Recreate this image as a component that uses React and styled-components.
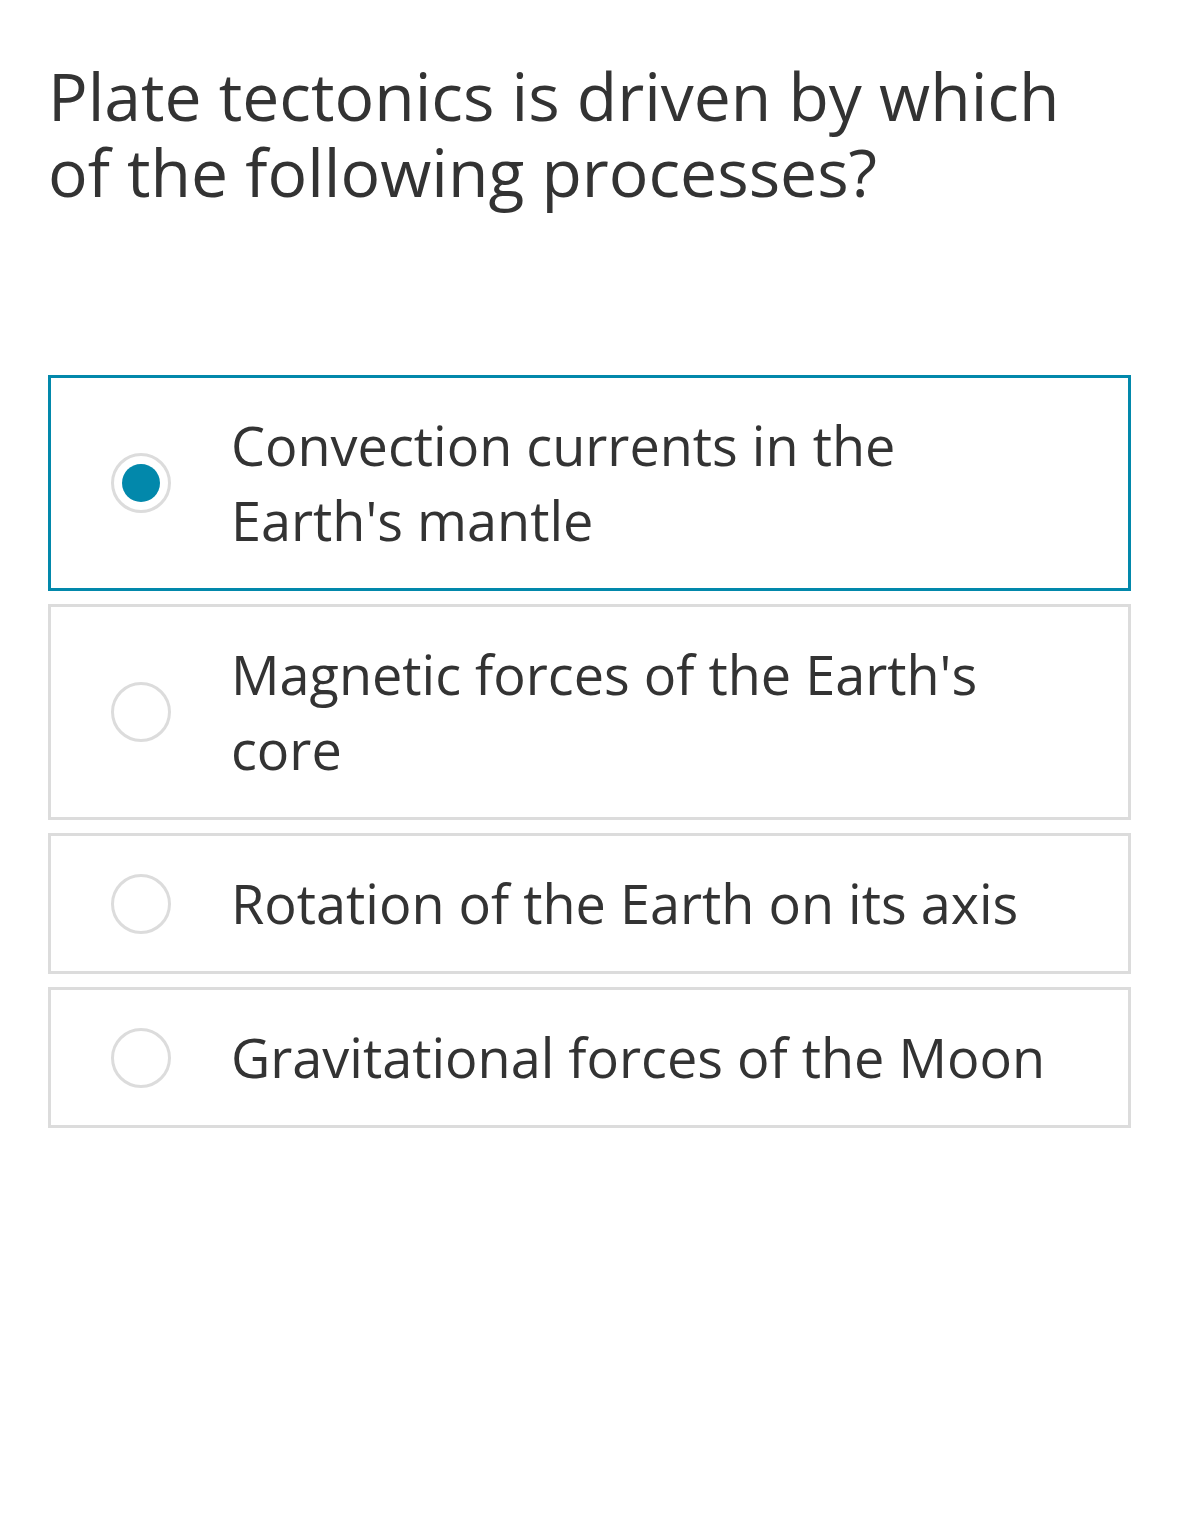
import React, { useState } from "react";
import styled, { createGlobalStyle } from "styled-components";

const options = [
  "Convection currents in the Earth's mantle",
  "Magnetic forces of the Earth's core",
  "Rotation of the Earth on its axis",
  "Gravitational forces of the Moon",
];

const App = () => {
  const [selected, setSelected] = useState(0);

  return (
    <>
      <GlobalStyle />
      <Page>
        <Question>
          Plate tectonics is driven by which of the following processes?
        </Question>
        <OptionList>
          {options.map((text, i) => (
            <Option
              key={text}
              $active={selected === i}
              onClick={() => setSelected(i)}
            >
              <Radio $active={selected === i} />
              <OptionText>{text}</OptionText>
            </Option>
          ))}
        </OptionList>
      </Page>
    </>
  );
};

export default App;

const GlobalStyle = createGlobalStyle`
  * {
    box-sizing: border-box;
  }

  body {
    margin: 0;
    background: #fff;
    font-family: "Open Sans", "Noto Sans", sans-serif;
    color: #333;
  }
`;

const Page = styled.div`
  padding: 57px 48px 0;
  min-height: 1522px;
`;

const Question = styled.h1`
  margin: 0;
  max-width: 1060px;
  font-size: 66px;
  font-weight: 400;
  line-height: 76px;
  color: #333;
`;

const OptionList = styled.div`
  display: flex;
  flex-direction: column;
  gap: 13px;
  margin-top: 166px;
`;

const Option = styled.div`
  display: flex;
  align-items: center;
  gap: 60px;
  padding: 30px 66px 30px 60px;
  border: 3px solid ${({ $active }) => ($active ? "#0288ab" : "#dcdcdc")};
  background: #fff;
  cursor: pointer;
`;

const Radio = styled.span`
  flex: none;
  width: 60px;
  height: 60px;
  border-radius: 50%;
  border: 3px solid #dcdcdc;
  display: flex;
  align-items: center;
  justify-content: center;

  &::after {
    content: "";
    width: 38px;
    height: 38px;
    border-radius: 50%;
    background: #0288ab;
    display: ${({ $active }) => ($active ? "block" : "none")};
  }
`;

const OptionText = styled.div`
  font-size: 54px;
  line-height: 75px;
`;
